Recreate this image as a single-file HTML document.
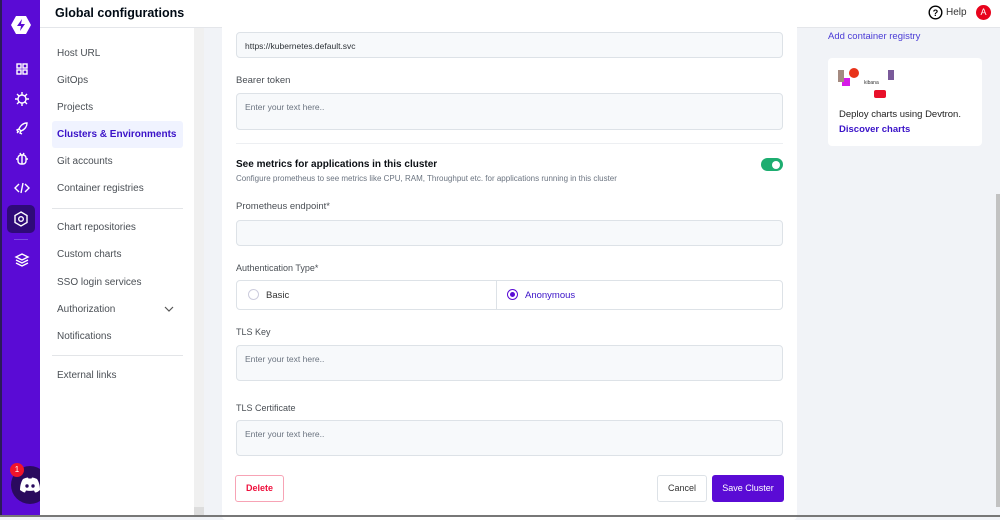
<!DOCTYPE html>
<html><head><meta charset="utf-8"><style>
*{margin:0;padding:0;box-sizing:border-box}
body{width:1000px;height:517px;overflow:hidden;position:relative;background:#f1f3f7;font-family:"Liberation Sans",sans-serif;color:#3b444c}
.a{position:absolute}
.nav{left:0;top:0;width:40px;height:517px;background:#5a0bd5;border-left:2px solid #2c1a5a}
.hdr{left:40px;top:0;width:960px;height:28px;background:#fff;border-bottom:1px solid #e4e6ea}
.side{left:40px;top:28px;width:154px;height:489px;background:#fff}
.side div{position:absolute;left:17px;font-size:10px;color:#4a4f55}
.sb{left:194px;top:28px;width:10px;height:489px;background:#f0f0f0}
.card{left:222px;top:20px;width:575px;height:500px;background:#fff;border-radius:4px}
.inp{position:absolute;left:14px;width:547px;background:#f7f9fb;border:1px solid #dde2e7;border-radius:4px;font-size:8.5px;color:#6b7480;padding:8px}
.lbl{position:absolute;left:14px;font-size:9.5px;color:#4a4f55}
.ic{position:absolute;left:12px;width:16px;height:16px}
</style></head><body>
<div class="a nav">
 <svg class="a" style="left:8px;top:14px" width="22" height="22" viewBox="0 0 22 22"><path d="M6 2h10l5 9-5 9H6L1 11z" fill="#fff"/><path d="M12 5l-5 7h4l-1 5 5-7h-4z" fill="#5a0bd5"/></svg>
 <svg class="ic" style="top:61px" viewBox="0 0 16 16" fill="none" stroke="#fff" stroke-width="1.4"><rect x="3" y="3" width="4" height="4"/><rect x="9" y="3" width="4" height="4"/><rect x="3" y="9" width="4" height="4"/><rect x="9" y="9" width="4" height="4"/></svg>
 <svg class="ic" style="top:91px" viewBox="0 0 16 16" fill="none" stroke="#fff" stroke-width="1.4"><circle cx="8" cy="8" r="4"/><path d="M8 1v3M8 12v3M1 8h3M12 8h3M3 3l2 2M11 11l2 2M3 13l2-2M11 5l2-2"/></svg>
 <svg class="ic" style="top:120px" viewBox="0 0 16 16" fill="none" stroke="#fff" stroke-width="1.4"><path d="M13 3c-4 0-7 3-8 6l2 2c3-1 6-4 6-8zM5 9l-2 1 1 2M7 11l-1 2 2 1M3 13l2-2"/></svg>
 <svg class="ic" style="top:150px" viewBox="0 0 16 16" fill="none" stroke="#fff" stroke-width="1.4"><rect x="4" y="5" width="8" height="9" rx="3"/><path d="M4 9H2M14 9h-2M8 5v9M6 3l1 2M10 3l-1 2"/></svg>
 <svg class="ic" style="top:180px" viewBox="0 0 16 16" fill="none" stroke="#fff" stroke-width="1.4"><path d="M5 4L1 8l4 4M11 4l4 4-4 4M9 3L7 13"/></svg>
 <div class="a" style="left:5px;top:205px;width:28px;height:28px;background:#2f0a78;border-radius:5px"></div>
 <svg class="ic" style="top:211px;left:11px" viewBox="0 0 16 16" fill="none" stroke="#fff" stroke-width="1.4"><path d="M8 1l6 3.5v7L8 15l-6-3.5v-7z"/><circle cx="8" cy="8" r="2.3"/></svg>
 <div class="a" style="left:12px;top:239px;width:14px;height:1px;background:#7a4be0"></div>
 <svg class="ic" style="top:252px" viewBox="0 0 16 16" fill="none" stroke="#fff" stroke-width="1.4"><path d="M8 2l6 3-6 3-6-3zM2 8l6 3 6-3M2 11l6 3 6-3"/></svg>
</div>
<div class="a" style="left:11px;top:466px;width:38px;height:38px;border-radius:50%;background:#2a0a5e"></div>
<svg class="a" style="left:19px;top:477px" width="22" height="16" viewBox="0 0 22 16"><path d="M4 2c2-1 4-1.5 5-1.5l.5 1h3l.5-1c1 0 3 .5 5 1.5 2 3 3 7 3 11-1.5 1.5-3.5 2.5-5 2.5l-1-2c-2 .5-6 .5-8 0l-1 2C5 15.5 3 14.5 1 13c0-4 1-8 3-11z" fill="#fff"/><circle cx="8" cy="9" r="1.7" fill="#2a0a5e"/><circle cx="14" cy="9" r="1.7" fill="#2a0a5e"/></svg>
<div class="a" style="left:10px;top:463px;width:14px;height:14px;border-radius:50%;background:#f0142b;color:#fff;font-size:8px;text-align:center;line-height:14px">1</div>
<div class="a hdr"><div class="a" style="left:15px;top:6px;font-size:12.5px;font-weight:bold;color:#000a14">Global configurations</div>
 <svg class="a" style="left:888px;top:5px" width="15" height="15" viewBox="0 0 15 15"><circle cx="7.5" cy="7.5" r="6.3" fill="none" stroke="#000" stroke-width="1.4"/><text x="7.5" y="11" font-size="9" font-weight="bold" text-anchor="middle" font-family="Liberation Sans">?</text></svg>
 <div class="a" style="left:906px;top:7px;font-size:10px;color:#333">Help</div>
 <div class="a" style="left:936px;top:5px;width:15px;height:15px;border-radius:50%;background:#e8031c;color:#fff;font-size:9px;text-align:center;line-height:15px">A</div>
</div>
<div class="a side">
 <div style="top:20px">Host URL</div><div style="top:47px">GitOps</div><div style="top:74px">Projects</div>
 <div style="left:12px;top:93px;width:131px;height:27px;background:#f0f3ff;border-radius:3px"></div>
 <div style="top:101px;color:#3a12c8;font-weight:bold">Clusters &amp; Environments</div>
 <div style="top:128px">Git accounts</div><div style="top:155px">Container registries</div>
 <div style="left:12px;top:180px;width:131px;height:1px;background:#e3e5e8"></div>
 <div style="top:194px">Chart repositories</div><div style="top:221px">Custom charts</div><div style="top:249px">SSO login services</div>
 <div style="top:276px">Authorization</div>
 <svg style="position:absolute;left:124px;top:278px" width="10" height="7" viewBox="0 0 10 7"><path d="M1 1l4 4 4-4" fill="none" stroke="#555" stroke-width="1.2"/></svg>
 <div style="top:303px">Notifications</div>
 <div style="left:12px;top:327px;width:131px;height:1px;background:#e3e5e8"></div>
 <div style="top:342px">External links</div>
</div>
<div class="a sb"></div>
<div class="a" style="left:194px;top:507px;width:10px;height:10px;background:#ddd"></div>
<div class="a card">
 <div class="inp" style="top:12px;height:26px;color:#2e3338">https://kubernetes.default.svc</div>
 <div class="lbl" style="top:55px">Bearer token</div>
 <div class="inp" style="top:73px;height:37px">Enter your text here..</div>
 <div class="a" style="left:14px;top:123px;width:547px;height:1px;background:#edeff2"></div>
 <div class="a" style="left:14px;top:139px;font-size:10px;font-weight:bold;color:#0b0f14">See metrics for applications in this cluster</div>
 <div class="a" style="left:14px;top:154px;font-size:8px;color:#6b7480">Configure prometheus to see metrics like CPU, RAM, Throughput etc. for applications running in this cluster</div>
 <div class="a" style="left:539px;top:138px;width:22px;height:13px;border-radius:7px;background:#1dad70"><div class="a" style="left:11px;top:2.5px;width:8px;height:8px;border-radius:50%;background:#fff"></div></div>
 <div class="lbl" style="top:181px">Prometheus endpoint*</div>
 <div class="inp" style="top:200px;height:26px"></div>
 <div class="lbl" style="top:243px;font-size:9px">Authentication Type*</div>
 <div class="a" style="left:14px;top:260px;width:547px;height:30px;border:1px solid #dde2e7;border-radius:4px">
  <div class="a" style="left:259px;top:0;width:1px;height:28px;background:#dde2e7"></div>
  <div class="a" style="left:11px;top:8px;width:11px;height:11px;border-radius:50%;border:1px solid #ccd"></div>
  <div class="a" style="left:29px;top:9px;font-size:9.5px;color:#333">Basic</div>
  <div class="a" style="left:270px;top:8px;width:11px;height:11px;border-radius:50%;border:1px solid #5a0bd5"><div class="a" style="left:2px;top:2px;width:5px;height:5px;border-radius:50%;background:#5a0bd5"></div></div>
  <div class="a" style="left:288px;top:9px;font-size:9.5px;color:#3a12c8">Anonymous</div>
 </div>
 <div class="lbl" style="top:307px;font-size:9px">TLS Key</div>
 <div class="inp" style="top:325px;height:36px">Enter your text here..</div>
 <div class="lbl" style="top:383px;font-size:9px">TLS Certificate</div>
 <div class="inp" style="top:400px;height:36px">Enter your text here..</div>
 <div class="a" style="left:13px;top:455px;width:49px;height:27px;border:1px solid #f7a3b5;border-radius:3px;color:#ef0f3c;font-size:9px;font-weight:bold;text-align:center;line-height:25px">Delete</div>
 <div class="a" style="left:435px;top:455px;width:50px;height:27px;border:1px solid #dde2e7;border-radius:3px;color:#333;font-size:9px;text-align:center;line-height:25px">Cancel</div>
 <div class="a" style="left:490px;top:455px;width:72px;height:27px;background:#5a0bd5;border-radius:3px;color:#fff;font-size:9px;text-align:center;line-height:27px">Save Cluster</div>
</div>
<div class="a" style="left:828px;top:31px;font-size:9.5px;color:#4a3bd6">Add container registry</div>
<div class="a" style="left:828px;top:58px;width:154px;height:88px;background:#fff;border-radius:4px">
 <div class="a" style="left:21px;top:10px;width:10px;height:10px;border-radius:50%;background:#e8331a"></div>
 <div class="a" style="left:14px;top:20px;width:8px;height:8px;background:#d61ae8"></div>
 <div class="a" style="left:36px;top:22px;font-size:5px;color:#333">kibana</div>
 <div class="a" style="left:46px;top:32px;width:12px;height:8px;background:#e8102a;border-radius:2px"></div>
 <div class="a" style="left:10px;top:12px;width:6px;height:12px;background:#a48a80"></div>
 <div class="a" style="left:60px;top:12px;width:6px;height:10px;background:#7a5a9a"></div>
 <div class="a" style="left:11px;top:51px;font-size:9.5px;color:#222">Deploy charts using Devtron.</div>
 <div class="a" style="left:11px;top:66px;font-size:9.5px;font-weight:bold;color:#3a12c8">Discover charts</div>
</div>
<div class="a" style="left:996px;top:194px;width:4px;height:313px;background:#c2c2c2"></div>
<div class="a" style="left:0;top:515px;width:1000px;height:2px;background:#777"></div>
</body></html>
